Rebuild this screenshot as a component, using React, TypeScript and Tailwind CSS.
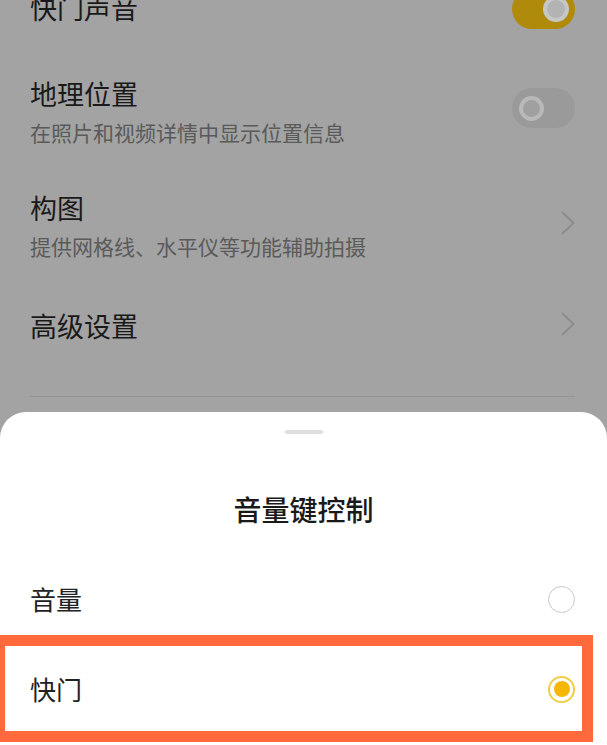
import React from "react";

const font = {
  fontFamily: '"Noto Sans CJK SC", "Noto Sans", sans-serif',
};

function Chevron() {
  return (
    <svg width="14" height="24" viewBox="0 0 14 24" fill="none" className="mb-[5px]">
      <polyline points="1.5,1.5 12.5,12 1.5,22.5" stroke="#8c8c8c" strokeWidth="1.8" strokeLinecap="round" strokeLinejoin="round" />
    </svg>
  );
}

function ToggleOn() {
  return (
    <div className="w-[63px] h-[40px] rounded-full bg-[#b08a0a] flex items-center justify-end pr-[6px] shrink-0 mt-[2px]">
      <div className="w-[26px] h-[26px] rounded-full bg-[#b3b3b3] border-[4px] border-[#c6c6c6]" />
    </div>
  );
}

function ToggleOff() {
  return (
    <div className="w-[63px] h-[40px] rounded-full bg-[#9a9a9a] flex items-center justify-start pl-[7px] shrink-0 mb-[7px]">
      <div className="w-[25px] h-[25px] rounded-full bg-[#a0a0a0] border-[4px] border-[#b9b9b9]" />
    </div>
  );
}

export default function App() {
  return (
    <div
      className="w-[607px] h-[745px] overflow-hidden bg-[#a3a3a3] flex flex-col"
      style={font}
    >
      <div className="-mt-[39px] pl-[30px] pr-[32px] flex flex-col">
        <div className="h-[94px] flex items-center justify-between">
          <span className="text-[27px] leading-[34px] text-[#1a1a1a]">快门声音</span>
          <ToggleOn />
        </div>

        <div className="pt-[22px] pb-[23px] flex items-center justify-between">
          <div className="flex flex-col">
            <span className="text-[27px] leading-[34px] text-[#1a1a1a]">地理位置</span>
            <span className="mt-[7px] text-[21px] leading-[28px] text-[#5a5a5a]">在照片和视频详情中显示位置信息</span>
          </div>
          <ToggleOff />
        </div>

        <div className="pt-[22px] pb-[23px] flex items-center justify-between">
          <div className="flex flex-col">
            <span className="text-[27px] leading-[34px] text-[#1a1a1a]">构图</span>
            <span className="mt-[7px] text-[21px] leading-[28px] text-[#5a5a5a]">提供网格线、水平仪等功能辅助拍摄</span>
          </div>
          <Chevron />
        </div>

        <div className="h-[86px] flex items-center justify-between">
          <span className="text-[27px] leading-[34px] text-[#1a1a1a]">高级设置</span>
          <Chevron />
        </div>

        <div className="mt-[27px] h-px bg-[#959595]" />
      </div>

      <div className="mt-[15px] flex-1 bg-white rounded-t-[26px] flex flex-col">
        <div className="mt-[18px] mx-auto w-[38px] h-[4px] rounded-full bg-[#dedede]" />
        <div className="mt-[57px] text-center text-[28px] leading-[36px] font-medium text-[#1a1a1a]">
          音量键控制
        </div>
        <div className="mt-[27px] flex flex-col">
          <div className="h-[90px] flex items-center justify-between pl-[30px] pr-[32px]">
            <span className="text-[26px] leading-[34px] text-[#222222]">音量</span>
            <div className="w-[27px] h-[27px] rounded-full border-[1.5px] border-[#c8c8c8]" />
          </div>
          <div className="relative h-[90px] flex items-center justify-between pl-[30px] pr-[32px]">
            <span className="text-[26px] leading-[34px] text-[#222222]">快门</span>
            <div className="w-[27px] h-[27px] rounded-full border-[2px] border-[#f1cd45] flex items-center justify-center">
              <div className="w-[16px] h-[16px] rounded-full bg-[#f5b700]" />
            </div>
            <div className="absolute -top-[9px] -bottom-[8px] -left-[6px] right-[14px] border-[11px] border-[#ff6a3d] pointer-events-none" />
          </div>
        </div>
      </div>
    </div>
  );
}
